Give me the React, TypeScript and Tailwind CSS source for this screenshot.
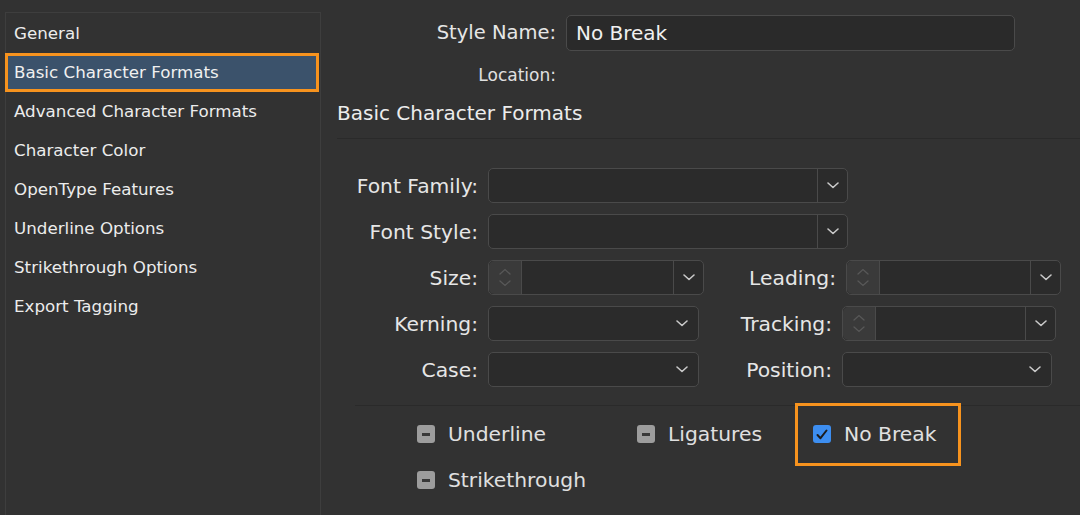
import type { ReactNode } from 'react';

const font = { fontFamily: '"DejaVu Sans", "Liberation Sans", sans-serif' };

const sections = [
  'General',
  'Basic Character Formats',
  'Advanced Character Formats',
  'Character Color',
  'OpenType Features',
  'Underline Options',
  'Strikethrough Options',
  'Export Tagging',
];

const Chevron = () => (
  <svg width="14" height="9" viewBox="0 0 14 9" fill="none">
    <path d="M2 2l5 4.5L12 2" stroke="#c9c9c9" strokeWidth="1.6" strokeLinecap="round" strokeLinejoin="round" />
  </svg>
);

const Spinner = () => (
  <div className="flex h-full w-[32px] shrink-0 flex-col items-center justify-center gap-[5px] rounded-l-[5px] bg-[#3a3a3a]">
    <svg width="14" height="7" viewBox="0 0 14 7" fill="none">
      <path d="M2 6l5-4.5L12 6" stroke="#585858" strokeWidth="1.3" strokeLinecap="round" />
    </svg>
    <svg width="14" height="7" viewBox="0 0 14 7" fill="none">
      <path d="M2 1l5 4.5L12 1" stroke="#585858" strokeWidth="1.3" strokeLinecap="round" />
    </svg>
  </div>
);

// combo box: optional spinner on the left, split chevron on the right
const Combo = ({ width, spinner, split }: { width: string; spinner?: boolean; split?: boolean }) => (
  <div className={`flex h-[35px] shrink-0 items-stretch rounded-[5px] border border-[#4a4a4a] bg-[#2b2b2b] ${width}`}>
    {spinner && <Spinner />}
    <div className={`flex-1 ${spinner ? 'border-l border-[#4a4a4a]' : ''}`} />
    {split ? (
      <div className="flex w-[30px] items-center justify-center border-l border-[#4a4a4a]">
        <Chevron />
      </div>
    ) : (
      <div className="flex w-[30px] items-center justify-center pr-[2px]">
        <Chevron />
      </div>
    )}
  </div>
);

const Label = ({ width, children }: { width: string; children: ReactNode }) => (
  <div className={`shrink-0 pr-[10px] text-right text-[20.3px] leading-[26px] text-[#e6e6e6] ${width}`}>{children}</div>
);

const Check = ({ checked, label }: { checked?: boolean; label: string }) => (
  <div className="flex h-[30px] items-center gap-[13px]">
    {checked ? (
      <div className="flex h-[18px] w-[18px] items-center justify-center rounded-[3px] bg-[#3d8ef0]">
        <svg width="12" height="11" viewBox="0 0 12 11" fill="none">
          <path d="M1.5 6l3 3.2L10.5 1.5" stroke="#1c1c1c" strokeWidth="2" strokeLinecap="round" strokeLinejoin="round" />
        </svg>
      </div>
    ) : (
      <div className="flex h-[18px] w-[18px] items-center justify-center rounded-[3px] bg-[#9d9d9d]">
        <div className="h-[3px] w-[8px] bg-[#383838]" />
      </div>
    )}
    <span className="text-[20.3px] leading-[26px] text-[#e0e0e0]">{label}</span>
  </div>
);

export default function App() {
  return (
    <div className="flex h-[515px] w-[1080px] overflow-hidden bg-[#323232]" style={font}>
      {/* sidebar */}
      <div className="ml-[5px] mt-[12px] h-[520px] w-[316px] shrink-0 border border-b-0 border-[#3e3e3e] pt-[1px]">
        {sections.map((s, i) =>
          i === 1 ? (
            <div
              key={s}
              className="-ml-px flex h-[39px] w-[314px] items-center border-[3px] border-[#f7931e] bg-[#3b526b] pl-[6px] text-[16.7px] text-[#f0f0f0]"
            >
              {s}
            </div>
          ) : (
            <div key={s} className="flex h-[39px] items-center pl-[8px] text-[16.7px] text-[#ececec]">
              {s}
            </div>
          ),
        )}
      </div>

      {/* main pane */}
      <div className="flex flex-1 flex-col">
        <div className="mt-[15px] flex items-center">
          <div className="w-[245px] shrink-0 pr-[10px] text-right text-[19.5px] text-[#e6e6e6]">Style Name:</div>
          <div className="flex h-[36px] w-[449px] items-center rounded-[5px] border border-[#4a4a4a] bg-[#2a2a2a] pl-[9px] text-[20px] text-[#f0f0f0]">
            No Break
          </div>
        </div>
        <div className="mt-[12px] flex items-center">
          <div className="w-[235px] text-right text-[17px] leading-[24px] text-[#e0e0e0]">Location:</div>
        </div>
        <div className="mt-[12px] pl-[16px] text-[20px] leading-[28px] text-[#ececec]">Basic Character Formats</div>
        <div className="ml-[16px] mt-[11px] h-px bg-[#2a2a2a]" />

        <div className="mt-[29px] flex flex-col gap-[11px]">
          <div className="flex items-center">
            <Label width="w-[167px]">Font Family:</Label>
            <Combo width="w-[360px]" split />
          </div>
          <div className="flex items-center">
            <Label width="w-[167px]">Font Style:</Label>
            <Combo width="w-[360px]" split />
          </div>
          <div className="flex items-center">
            <Label width="w-[167px]">Size:</Label>
            <Combo width="w-[216px]" spinner split />
            <Label width="w-[142px]">Leading:</Label>
            <Combo width="w-[215px]" spinner split />
          </div>
          <div className="flex items-center">
            <Label width="w-[167px]">Kerning:</Label>
            <Combo width="w-[211px]" />
            <Label width="w-[143px]">Tracking:</Label>
            <Combo width="w-[214px]" spinner split />
          </div>
          <div className="flex items-center">
            <Label width="w-[167px]">Case:</Label>
            <Combo width="w-[211px]" />
            <Label width="w-[143px]">Position:</Label>
            <Combo width="w-[210px]" />
          </div>
        </div>

        <div className="ml-[34px] mt-[18px] h-px bg-[#2a2a2a]" />

        <div className="ml-[96px] mt-[13px] grid grid-cols-[220px_176px_auto] gap-y-[16px]">
          <Check label="Underline" />
          <Check label="Ligatures" />
          <div className="relative">
            <Check checked label="No Break" />
            <div className="pointer-events-none absolute -left-[18px] -top-[16px] h-[63px] w-[166px] border-[3px] border-[#f7931e]" />
          </div>
          <Check label="Strikethrough" />
        </div>
      </div>
    </div>
  );
}
